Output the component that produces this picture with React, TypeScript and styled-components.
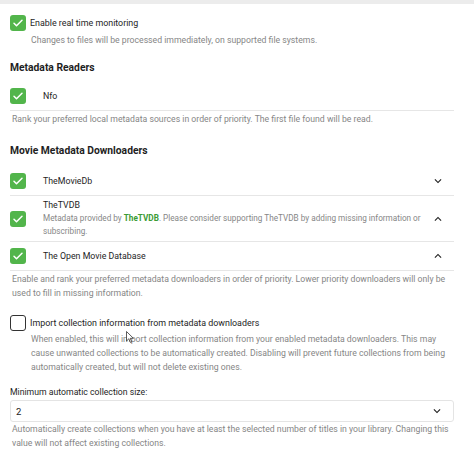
import styled, { createGlobalStyle } from "styled-components";

const GlobalStyle = createGlobalStyle`
  html, body {
    margin: 0;
    padding: 0;
    background: #fff;
  }
  body {
    font-family: Roboto, "Liberation Sans", sans-serif;
    color: #222;
  }
`;

const Root = styled.div`
  position: relative;
`;

const TopBar = styled.div`
  height: 4px;
  background: #ececec;
`;

const Page = styled.div`
  padding: 0 20px 0 10px;
`;

const CheckRow = styled.label<{ $mt: number }>`
  display: flex;
  align-items: center;
  gap: 4px;
  margin-top: ${(p) => p.$mt}px;
  height: 16px;
`;

const Box = styled.span<{ $checked: boolean }>`
  flex: none;
  width: 16px;
  height: 16px;
  box-sizing: border-box;
  border-radius: 3px;
  display: flex;
  align-items: center;
  justify-content: center;
  background: ${(p) => (p.$checked ? "#52b54b" : "#fff")};
  border: ${(p) => (p.$checked ? "none" : "1.5px solid #333")};
`;

const Label = styled.span`
  font-size: 8.9px;
  line-height: 14px;
  color: #1e1e1e;
`;

const Desc = styled.div<{ $ml?: number; $mt?: number }>`
  font-size: 8.7px;
  line-height: 14px;
  color: #868686;
  margin-left: ${(p) => p.$ml ?? 2}px;
  margin-top: ${(p) => p.$mt ?? 1}px;
`;

const Heading = styled.h2<{ $mt: number }>`
  margin: ${(p) => p.$mt}px 0 0;
  font-size: 10.3px;
  line-height: 16px;
  font-weight: 700;
  color: #1e1e1e;
`;

const List = styled.div<{ $mt: number }>`
  margin-top: ${(p) => p.$mt}px;
`;

const Item = styled.div`
  display: flex;
  align-items: center;
  min-height: 22px;
  padding: 3px 0;
  border-bottom: 1px solid #e6e6e6;
`;

const ItemBody = styled.div`
  flex: 1;
  margin-left: 17px;
  padding-right: 6px;
`;

const ItemTitle = styled.div`
  font-size: 8.8px;
  line-height: 13px;
  color: #1e1e1e;
`;

const ItemDesc = styled.div`
  font-size: 8.2px;
  line-height: 13px;
  color: #868686;
`;

const Strong = styled.b`
  color: #3b9b34;
  font-weight: 700;
`;

const Chevron = styled.span`
  flex: none;
  width: 14px;
  height: 14px;
  margin-right: 9px;
  display: flex;
`;

const FieldLabel = styled.div`
  margin-top: 11px;
  font-size: 8.7px;
  line-height: 14px;
  color: #1e1e1e;
`;

const Select = styled.div`
  margin-top: 1px;
  height: 22px;
  box-sizing: border-box;
  border: 1px solid #e4e4e4;
  border-radius: 3px;
  display: flex;
  align-items: center;
  justify-content: space-between;
  padding-left: 5px;
  font-size: 9.5px;
  color: #222;
`;

const Pointer = styled.svg`
  position: absolute;
  left: 126px;
  top: 331px;
`;

const Check = () => (
  <svg width="12" height="12" viewBox="0 0 24 24">
    <path d="M4 12.5l5 5L20 6.5" fill="none" stroke="#fff" strokeWidth="3" strokeLinecap="round" strokeLinejoin="round" />
  </svg>
);

const ChevronIcon = ({ up }: { up?: boolean }) => (
  <Chevron>
    <svg width="14" height="14" viewBox="0 0 24 24">
      <path
        d={up ? "M12 8l-6 6 1.41 1.41L12 10.83l4.59 4.58L18 14z" : "M16.59 8.59L12 13.17 7.41 8.59 6 10l6 6 6-6z"}
        fill="#222"
      />
    </svg>
  </Chevron>
);

const Checkbox = ({ checked }: { checked: boolean }) => <Box $checked={checked}>{checked && <Check />}</Box>;

export default function App() {
  return (
    <Root>
      <GlobalStyle />
      <TopBar />
      <Page>
        <CheckRow $mt={11}>
          <Checkbox checked />
          <Label>Enable real time monitoring</Label>
        </CheckRow>
        <Desc $ml={21} $mt={2}>
          Changes to files will be processed immediately, on supported file systems.
        </Desc>

        <Heading $mt={13}>Metadata Readers</Heading>
        <List $mt={6}>
          <Item>
            <Checkbox checked />
            <ItemBody>
              <ItemTitle>Nfo</ItemTitle>
            </ItemBody>
          </Item>
        </List>
        <Desc $mt={1}>Rank your preferred local metadata sources in order of priority. The first file found will be read.</Desc>

        <Heading $mt={17}>Movie Metadata Downloaders</Heading>
        <List $mt={8}>
          <Item>
            <Checkbox checked />
            <ItemBody>
              <ItemTitle>TheMovieDb</ItemTitle>
            </ItemBody>
            <ChevronIcon />
          </Item>
          <Item>
            <Checkbox checked />
            <ItemBody>
              <ItemTitle>TheTVDB</ItemTitle>
              <ItemDesc>
                Metadata provided by <Strong>TheTVDB</Strong>. Please consider supporting TheTVDB by adding missing
                information or subscribing.
              </ItemDesc>
            </ItemBody>
            <ChevronIcon up />
          </Item>
          <Item>
            <Checkbox checked />
            <ItemBody>
              <ItemTitle>The Open Movie Database</ItemTitle>
            </ItemBody>
            <ChevronIcon up />
          </Item>
        </List>
        <Desc>
          Enable and rank your preferred metadata downloaders in order of priority. Lower priority downloaders will
          only be used to fill in missing information.
        </Desc>

        <CheckRow $mt={15}>
          <Checkbox checked={false} />
          <Label>Import collection information from metadata downloaders</Label>
        </CheckRow>
        <Desc $ml={21} $mt={1}>
          When enabled, this will import collection information from your enabled metadata downloaders. This may cause
          unwanted collections to be automatically created. Disabling will prevent future collections from being
          automatically created, but will not delete existing ones.
        </Desc>

        <FieldLabel>Minimum automatic collection size:</FieldLabel>
        <Select>
          <span>2</span>
          <ChevronIcon />
        </Select>
        <Desc $mt={0}>
          Automatically create collections when you have at least the selected number of titles in your library.
          Changing this value will not affect existing collections.
        </Desc>
      </Page>
      <Pointer width="8" height="12" viewBox="0 0 8 12">
        <path d="M0.5 0.5v9.5l2.3-2.2 1.6 3.6 1.4-0.6-1.6-3.5h3.2z" fill="#fff" stroke="#333" strokeWidth="0.8" />
      </Pointer>
    </Root>
  );
}
